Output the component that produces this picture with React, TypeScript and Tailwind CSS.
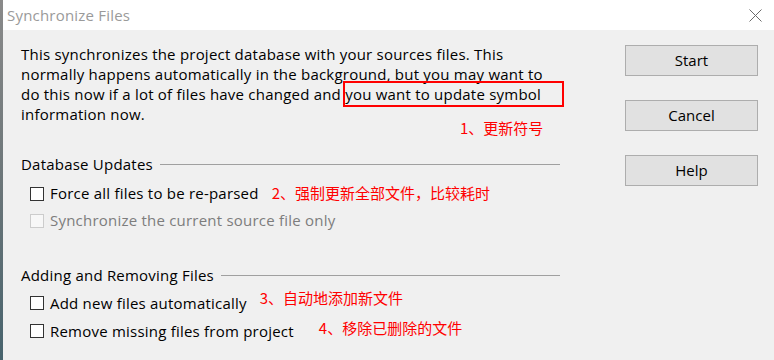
import React from 'react';

const UI_FONT = 'font-["Open_Sans","Noto_Sans",sans-serif]';
const NOTE_FONT = 'font-["Noto_Sans_CJK_SC","Noto_Sans",sans-serif] tracking-normal';

function Checkbox({ disabled = false }: { disabled?: boolean }) {
  return (
    <span
      className={`inline-block w-[14px] h-[14px] shrink-0 border ${
        disabled ? 'border-[#cccccc] bg-[#f7f7f7]' : 'border-[#333333] bg-white'
      }`}
    />
  );
}

function SectionTitle({ label }: { label: string }) {
  return (
    <div className="flex items-center gap-[7px] h-[20px] leading-[20px]">
      <span className="text-black">{label}</span>
      <div className="flex-1 h-px bg-[#a0a0a0]" />
    </div>
  );
}

function Option({
  label,
  note,
  disabled = false,
  noteClass = '',
  rowClass = 'h-[27px]'
}: {
  label: string;
  note?: string;
  disabled?: boolean;
  noteClass?: string;
  rowClass?: string;
}) {
  return (
    <div className={`flex items-center pl-[9px] ${rowClass}`}>
      <Checkbox disabled={disabled} />
      <span className={`ml-[6px] ${disabled ? 'text-[#7d7d7d]' : 'text-black'}`}>{label}</span>
      {note && (
        <span className={`${NOTE_FONT} text-[15px] text-[#ff0000] ${noteClass}`}>{note}</span>
      )}
    </div>
  );
}

function DialogButton({ label }: { label: string }) {
  return (
    <button className="w-[133px] h-[31px] border border-[#adadad] bg-[#e1e1e1] text-black text-[15px] leading-none">
      {label}
    </button>
  );
}

export default function App() {
  return (
    <div className={`w-[774px] h-[360px] flex overflow-hidden ${UI_FONT} text-[15px]`}>
      {/* left window edge */}
      <div className="w-[3px] h-full bg-gradient-to-b from-[#8a8a8a] via-[#6c7679] to-[#47636d]" />

      <div className="flex-1 flex flex-col">
        {/* title bar */}
        <div className="h-[30px] bg-white flex items-center pl-[4px] pr-[12px]">
          <span className="text-[#9a9a9a] text-[15px] tracking-[0.2px]">Synchronize Files</span>
          <svg className="ml-auto" width="13" height="13" viewBox="0 0 13 13">
            <path d="M0.5 0.5 L12.5 12.5 M12.5 0.5 L0.5 12.5" stroke="#6b6b6b" strokeWidth="1" fill="none" />
          </svg>
        </div>

        {/* body */}
        <div className="flex-1 bg-[#f0f0f0] flex">
          <div className="w-[557px] pl-[18px] pt-[14px] tracking-[0.22px]">
            <p className="leading-[20px] text-black">
              This synchronizes the project database with your sources files. This
              <br />
              normally happens automatically in the background, but you may want to
              <br />
              do this now if a lot of files have changed and{' '}
              <span className="relative">
                you want to update symbol
                <span className="absolute -left-[2px] -right-[23px] -top-[3px] -bottom-[3px] border-2 border-[#ff0000]" />
              </span>
              <br />
              information now.
            </p>
            <div className={`${NOTE_FONT} -mt-[6px] pl-[439px] leading-[20px] text-[15px] text-[#ff0000]`}>
              1、更新符号
            </div>

            <div className="mt-[16px]">
              <SectionTitle label="Database Updates" />
            </div>
            <div className="mt-[6px]">
              <Option label="Force all files to be re-parsed" note="2、强制更新全部文件，比较耗时" noteClass="ml-[13px]" />
              <Option label="Synchronize the current source file only" disabled />
            </div>

            <div className="mt-[31px]">
              <SectionTitle label="Adding and Removing Files" />
            </div>
            <div className="mt-[4px]">
              <Option
                label="Add new files automatically"
                note="3、自动地添加新文件"
                noteClass="ml-[13px] -mt-[10px]"
                rowClass="h-[28px]"
              />
              <Option
                label="Remove missing files from project"
                note="4、移除已删除的文件"
                noteClass="ml-[25px] -mt-[6px]"
                rowClass="h-[28px]"
              />
            </div>
          </div>

          <div className="ml-auto mr-[16px] pt-[15px] flex flex-col gap-[24px]">
            <DialogButton label="Start" />
            <DialogButton label="Cancel" />
            <DialogButton label="Help" />
          </div>
        </div>
      </div>
    </div>
  );
}
